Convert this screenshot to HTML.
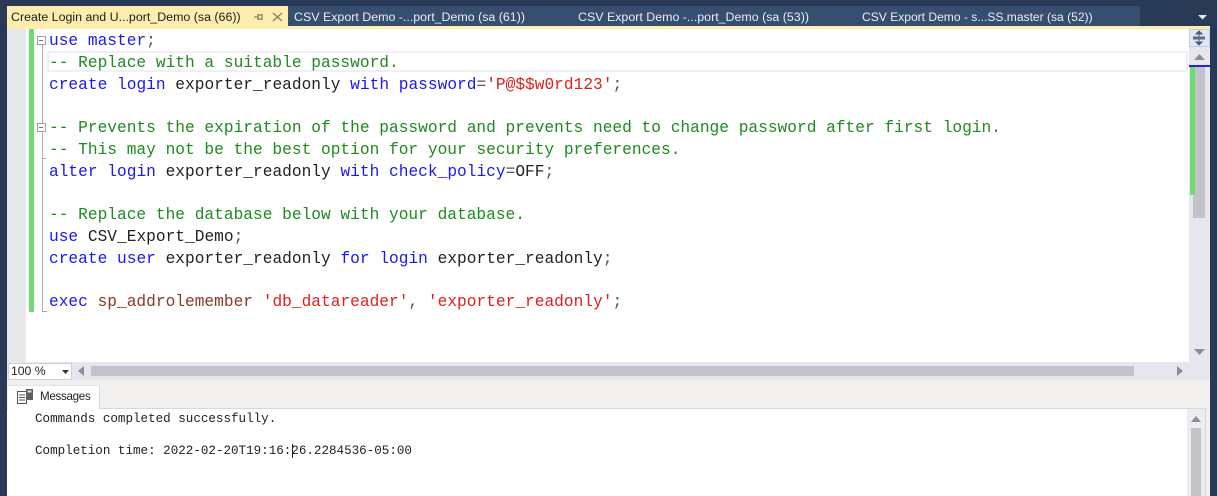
<!DOCTYPE html>
<html><head><meta charset="utf-8"><style>
html,body{margin:0;padding:0}
body{width:1217px;height:496px;position:relative;overflow:hidden;background:#293a56;font-family:"Liberation Sans",sans-serif}
.a{position:absolute}
.tab{position:absolute;top:6px;height:20px;line-height:23px;font-size:12.42px;color:#e8edf4;white-space:nowrap}
.l{position:absolute;left:49px;height:22px;font:16.19px/22px "Liberation Mono",monospace;white-space:pre;color:#222}
.k{color:#1a1af0}.p{color:#8a3a20}.s{color:#e0201c}.g{color:#555}
.m{position:absolute;left:35px;font:12.57px/16px "Liberation Mono",monospace;white-space:pre;color:#222}
</style></head><body>
<div class="a" style="left:288px;top:6px;width:852px;height:20px;background:#364e70"></div>
<div class="a" style="left:7px;top:6px;width:281px;height:20px;background:#fdeeb0"></div>
<div class="tab" style="left:11px;color:#1e1e1e">Create Login and U...port_Demo (sa (66))</div>
<svg class="a" style="left:250px;top:11px" width="34" height="12"><path d="M4 6h4M8 3v6M8 4h4M8 8h4M12 3v6" stroke="#6f6a50" fill="none"/><path d="M23 2l9 8M32 2l-9 8" stroke="#8a8460" stroke-width="1.500"/></svg>
<div class="tab" style="left:294px">CSV Export Demo -...port_Demo (sa (61))</div>
<div class="tab" style="left:578px">CSV Export Demo -...port_Demo (sa (53))</div>
<div class="tab" style="left:862px;font-size:12.07px">CSV Export Demo - s...SS.master (sa (52))</div>
<svg class="a" style="left:1198px;top:15px" width="10" height="6"><path d="M0 0h9L4.500 4.500z" fill="#e6e8ee"/></svg>

<div class="a" style="left:7px;top:26px;width:1203px;height:3px;background:#fdeeb0"></div>
<div class="a" style="left:7px;top:29px;width:1203px;height:333px;background:#fff"></div>
<div class="a" style="left:7px;top:29px;width:19px;height:333px;background:#e6e7e8"></div>
<div class="a" style="left:29px;top:29px;width:5px;height:283px;background:#6fdc6f"></div>
<div class="a" style="left:47px;top:51px;width:1141px;height:21px;border:2px solid #f0f0f4;box-sizing:border-box"></div>
<!-- outline guides -->
<div class="a" style="left:42px;top:45px;width:1px;height:267px;background:#b0b0b0"></div>
<div class="a" style="left:42px;top:158px;width:4px;height:1px;background:#b0b0b0"></div>
<div class="a" style="left:42px;top:311px;width:5px;height:1px;background:#a5a5a5"></div>
<div class="a" style="left:37px;top:36px;width:7px;height:7px;border:1px solid #a0a0a0;background:#fff"></div>
<div class="a" style="left:39px;top:40px;width:4px;height:1px;background:#777"></div>
<div class="a" style="left:37px;top:123px;width:7px;height:7px;border:1px solid #a0a0a0;background:#fff"></div>
<div class="a" style="left:39px;top:127px;width:4px;height:1px;background:#777"></div>

<div class="l" style="top:30px"><span class="k">use</span> <span class="k">master</span><span class="g">;</span></div>
<div class="l" style="top:52px;color:#1f8a1f">-- Replace with a suitable password.</div>
<div class="l" style="top:74px"><span class="k">create</span> <span class="k">login</span> exporter_readonly <span class="k">with</span> <span class="k">password</span><span class="g">=</span><span class="s">'P@$$w0rd123'</span><span class="g">;</span></div>
<div class="l" style="top:117px;color:#1f8a1f">-- Prevents the expiration of the password and prevents need to change password after first login.</div>
<div class="l" style="top:139px;color:#1f8a1f">-- This may not be the best option for your security preferences.</div>
<div class="l" style="top:161px"><span class="k">alter</span> <span class="k">login</span> exporter_readonly <span class="k">with</span> <span class="k">check_policy</span><span class="g">=</span>OFF<span class="g">;</span></div>
<div class="l" style="top:204px;color:#1f8a1f">-- Replace the database below with your database.</div>
<div class="l" style="top:226px"><span class="k">use</span> CSV_Export_Demo<span class="g">;</span></div>
<div class="l" style="top:248px"><span class="k">create</span> <span class="k">user</span> exporter_readonly <span class="k">for</span> <span class="k">login</span> exporter_readonly<span class="g">;</span></div>
<div class="l" style="top:291px"><span class="k">exec</span> <span class="p">sp_addrolemember</span> <span class="s">'db_datareader'</span><span class="g">,</span> <span class="s">'exporter_readonly'</span><span class="g">;</span></div>

<!-- editor scrollbar -->
<div class="a" style="left:1189px;top:29px;width:21px;height:333px;background:#e6e7ee"></div>
<div class="a" style="left:1189px;top:29px;width:21px;height:18px;background:#dfe8f4;border:1px solid #c5d0de;box-sizing:border-box"></div>
<svg class="a" style="left:1192px;top:30px" width="14" height="16"><path d="M7 1l-3 3h6zM7 15l-3-3h6zM7 3v10" fill="#4a5a78" stroke="#4a5a78"/><rect x="1" y="6.500" width="12" height="3" fill="#5a6c8c"/></svg>
<svg class="a" style="left:1194px;top:54px" width="12" height="7"><path d="M0 6h11L5.500 0z" fill="#8a8f92"/></svg>
<div class="a" style="left:1189px;top:65px;width:21px;height:2px;background:#2222e0"></div>
<div class="a" style="left:1193px;top:67px;width:12px;height:151px;background:#c2c3c9"></div>
<div class="a" style="left:1190px;top:67px;width:5px;height:128px;background:#6fdc6f"></div>
<svg class="a" style="left:1194px;top:349px" width="12" height="7"><path d="M0 0h11L5.500 6z" fill="#8a8f92"/></svg>

<!-- zoom + h scrollbar -->
<div class="a" style="left:7px;top:362px;width:1203px;height:18px;background:#e6e7ee"></div>
<div class="a" style="left:8px;top:363px;width:64px;height:17px;background:#fff;border:1px solid #cfd0d6;box-sizing:border-box;font-size:12.200px;line-height:15px;padding-left:2px;color:#222">100 %</div>
<svg class="a" style="left:62px;top:370px" width="8" height="5"><path d="M0 0h7L3.500 4z" fill="#333"/></svg>
<svg class="a" style="left:78px;top:366px" width="7" height="11"><path d="M6 0v10L0 5z" fill="#8a8f92"/></svg>
<div class="a" style="left:91px;top:366px;width:1043px;height:10px;background:#c2c3c9"></div>
<svg class="a" style="left:1177px;top:366px" width="7" height="11"><path d="M0 0v10l6-5z" fill="#8a8f92"/></svg>

<!-- messages -->
<div class="a" style="left:7px;top:380px;width:1203px;height:116px;background:#f1f0ef"></div>
<div class="a" style="left:7px;top:408px;width:1199px;height:88px;background:#fff;border-top:1px solid #d8d8dc;border-right:1px solid #d8d8dc;box-sizing:border-box"></div>
<div class="a" style="left:8px;top:385px;width:92px;height:24px;background:#fff;box-sizing:border-box;border-right:1px solid #dcdcdc;border-top:1px solid #e4e4e4"></div>
<svg class="a" style="left:17px;top:388px" width="17" height="17"><rect x=".5" y="3.500" width="9" height="12" fill="#fff" stroke="#555"/><path d="M2 7h6M2 9.500h6M2 12h6" stroke="#555"/><rect x="9" y="1" width="7" height="11" fill="#5a5f66"/><rect x="10.500" y="2.500" width="4" height="2" fill="#ddd"/></svg>
<div class="a" style="left:40px;top:389px;font-size:11.600px;letter-spacing:-.3px;line-height:16px;color:#222">Messages</div>
<div class="m" style="top:411px">Commands completed successfully.</div>
<div class="m" style="top:443px">Completion time: 2022-02-20T19:16:26.2284536-05:00</div>
<div class="a" style="left:292px;top:444px;width:1px;height:14px;background:#222"></div>
<div class="a" style="left:1187px;top:409px;width:18px;height:87px;background:#ececf1"></div>
<svg class="a" style="left:1191px;top:416px" width="11" height="7"><path d="M0 6h10L5 0z" fill="#8a8f92"/></svg>
<div class="a" style="left:1191px;top:428px;width:10px;height:68px;background:#c2c3c9"></div>
</body></html>
